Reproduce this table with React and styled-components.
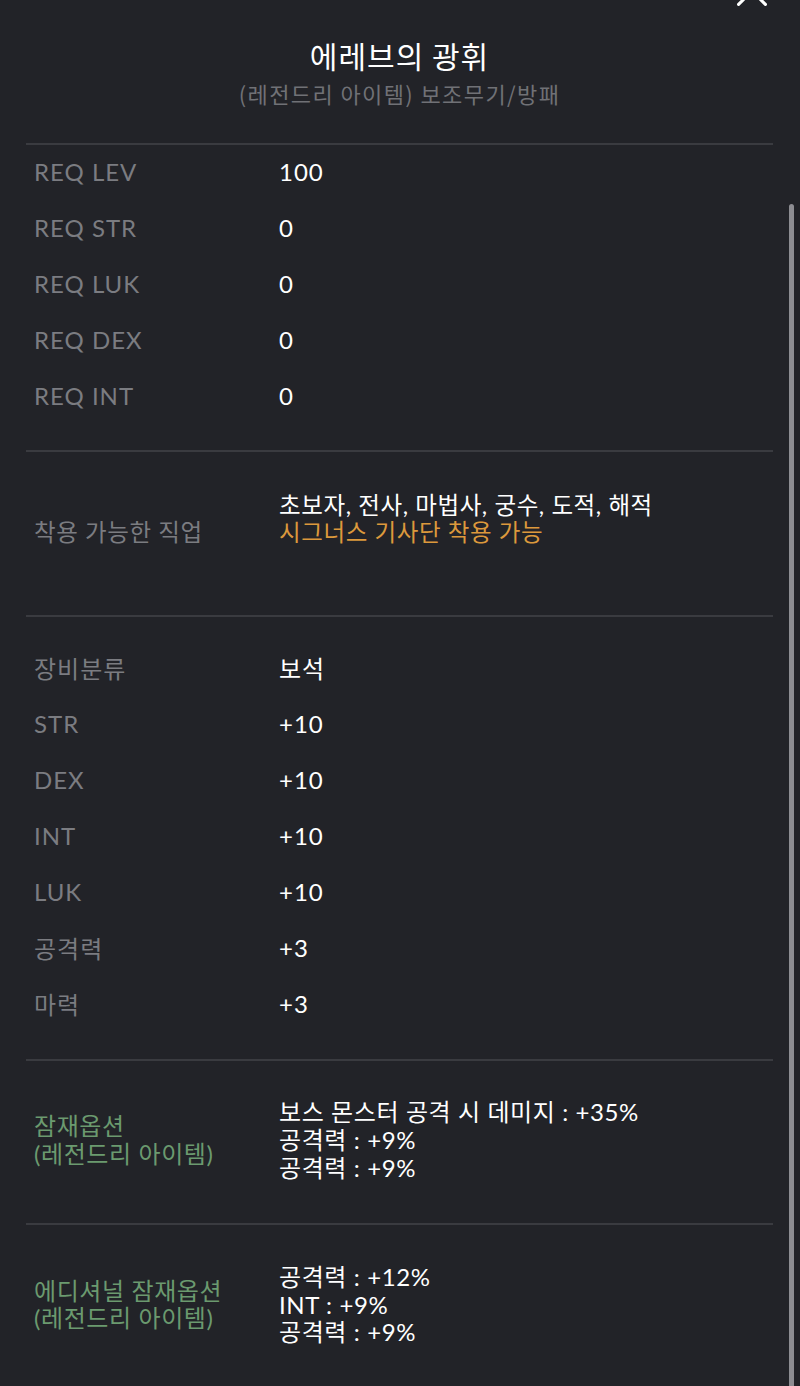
import React from "react";
import styled, { createGlobalStyle } from "styled-components";

const GlobalStyle = createGlobalStyle`
  html, body {
    margin: 0;
    padding: 0;
    background: #222328;
  }
  body {
    font-family: Lato, "Noto Sans CJK KR", sans-serif;
    color: #ffffff;
    overflow: hidden;
  }
`;

const reqRows = [
  ["REQ LEV", "100"],
  ["REQ STR", "0"],
  ["REQ LUK", "0"],
  ["REQ DEX", "0"],
  ["REQ INT", "0"],
];

const statRows = [
  ["장비분류", "보석"],
  ["STR", "+10"],
  ["DEX", "+10"],
  ["INT", "+10"],
  ["LUK", "+10"],
  ["공격력", "+3"],
  ["마력", "+3"],
];

const App = () => {
  return (
    <>
      <GlobalStyle />
      <Wrapper>
        <CloseButton aria-label="close">
          <svg width="46" height="46" viewBox="0 0 24 24" fill="none">
            <path
              d="M5 5L19 19M19 5L5 19"
              stroke="#ffffff"
              strokeWidth="1.6"
              strokeLinecap="round"
            />
          </svg>
        </CloseButton>
        <Header>
          <Title>에레브의 광휘</Title>
          <Subtitle>(레전드리 아이템) 보조무기/방패</Subtitle>
        </Header>

        <Section $pad="0 0 25px">
          {reqRows.map(([k, v]) => (
            <Row key={k}>
              <Label>{k}</Label>
              <Value>{v}</Value>
            </Row>
          ))}
        </Section>

        <Section $pad="40px 0 42px">
          <Block $lh={27} $size={23.5}>
            <Label>착용 가능한 직업</Label>
            <Lines>
              <div>초보자, 전사, 마법사, 궁수, 도적, 해적</div>
              <Orange>시그너스 기사단 착용 가능</Orange>
              <div>&nbsp;</div>
            </Lines>
          </Block>
        </Section>

        <Section $pad="24px 0 26px">
          {statRows.map(([k, v]) => (
            <Row key={k}>
              <Label>{k}</Label>
              <Value>{v}</Value>
            </Row>
          ))}
        </Section>

        <Section $pad="37px 0 41px">
          <Block $lh={28}>
            <Label $green>
              잠재옵션
              <br />
              (레전드리 아이템)
            </Label>
            <Lines>
              <div>보스 몬스터 공격 시 데미지 : +35%</div>
              <div>공격력 : +9%</div>
              <div>공격력 : +9%</div>
            </Lines>
          </Block>
        </Section>

        <Section $pad="38px 0 40px">
          <Block $lh={27.5}>
            <Label $green>
              에디셔널 잠재옵션
              <br />
              (레전드리 아이템)
            </Label>
            <Lines>
              <div>공격력 : +12%</div>
              <div>INT : +9%</div>
              <div>공격력 : +9%</div>
            </Lines>
          </Block>
        </Section>

        <ScrollThumb />
      </Wrapper>
    </>
  );
};

const Wrapper = styled.main`
  position: relative;
  width: 800px;
  height: 1386px;
  box-sizing: border-box;
  padding: 0 27px 0 26px;
  overflow: hidden;
`;

const CloseButton = styled.button`
  position: absolute;
  top: -32px;
  right: 25px;
  padding: 0;
  border: none;
  background: none;
  line-height: 0;
`;

const Header = styled.header`
  display: flex;
  flex-direction: column;
  align-items: center;
  padding-top: 34px;
  height: 143px;
  box-sizing: border-box;
`;

const Title = styled.h1`
  margin: 0;
  font-family: "Noto Sans CJK KR", sans-serif;
  font-size: 30px;
  font-weight: 400;
  line-height: 42px;
  letter-spacing: 1px;
  color: #ffffff;
`;

const Subtitle = styled.div`
  font-family: "Noto Sans CJK KR", sans-serif;
  font-size: 22px;
  line-height: 34px;
  letter-spacing: 1.4px;
  color: #707176;
`;

const Section = styled.section`
  border-top: 2px solid #3a3b40;
  padding: ${(p) => p.$pad};
`;

const Row = styled.div`
  display: grid;
  grid-template-columns: 245px 1fr;
  align-items: center;
  box-sizing: border-box;
  height: 56px;
  padding: 0 0 4px 8px;
  font-size: 24px;
  letter-spacing: 1px;
`;

const Block = styled.div`
  display: grid;
  grid-template-columns: 245px 1fr;
  align-items: center;
  padding-left: 8px;
  font-size: ${(p) => p.$size || 24}px;
  line-height: ${(p) => p.$lh}px;
  letter-spacing: 0.6px;
`;

const Label = styled.div`
  color: ${(p) => (p.$green ? "#6b9a6f" : "#7b7c81")};
`;

const Value = styled.div`
  color: #ffffff;
`;

const Lines = styled.div`
  color: #ffffff;
`;

const Orange = styled.div`
  color: #dc993c;
`;

const ScrollThumb = styled.div`
  position: absolute;
  top: 204px;
  right: 6px;
  width: 5px;
  height: 1200px;
  border-radius: 3px;
  background: #8d8d92;
`;

export default App;
